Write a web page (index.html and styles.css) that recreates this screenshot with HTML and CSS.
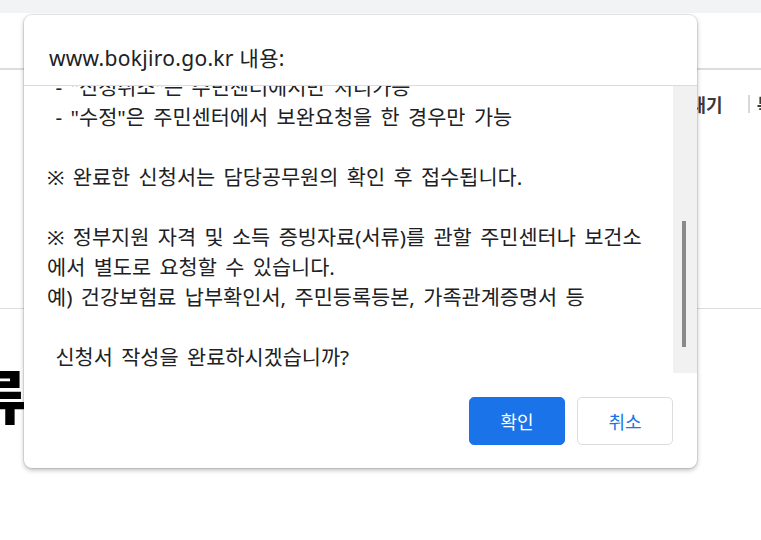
FILE: index.html
```html
<!DOCTYPE html>
<html lang="ko">
<head>
<meta charset="utf-8">
<title>복지로</title>
<link rel="stylesheet" href="styles.css">
</head>
<body>
<div class="page">
  <div class="topbar"></div>
  <header class="gnb"></header>
  <section class="util">
    <div class="util-links">
      <span class="util-link">보내기</span>
      <span class="util-sep"></span>
      <span class="util-link">복지로</span>
    </div>
  </section>
  <div class="heading-wrap">
    <h1 class="heading">복지서비스 분류</h1>
  </div>
</div>

<div class="dialog" role="dialog">
  <div class="dialog-head">www.bokjiro.go.kr 내용:</div>
  <div class="dialog-body">
    <div class="dialog-text">
      <div class="dialog-scroll"> - "신청취소"는 주민센터에서만 처리가능
 - "수정"은 주민센터에서 보완요청을 한 경우만 가능

※ 완료한 신청서는 담당공무원의 확인 후 접수됩니다.

※ 정부지원 자격 및 소득 증빙자료(서류)를 관할 주민센터나 보건소
에서 별도로 요청할 수 있습니다.
예) 건강보험료 납부확인서, 주민등록등본, 가족관계증명서 등

 신청서 작성을 완료하시겠습니까?</div>
    </div>
    <div class="scrollbar"><div class="scroll-thumb"></div></div>
  </div>
  <div class="dialog-foot">
    <button class="btn btn-primary" type="button">확인</button>
    <button class="btn btn-secondary" type="button">취소</button>
  </div>
</div>
</body>
</html>
```
FILE: styles.css
```css
* { box-sizing: border-box; }
html, body {
  margin: 0;
  padding: 0;
  background: #ffffff;
}
body {
  width: 761px;
  height: 540px;
  overflow: hidden;
  font-family: "Noto Sans", "Noto Sans CJK KR", sans-serif;
  color: #202124;
}
.page {
  width: 761px;
}
.topbar {
  height: 13px;
  background: #f1f3f4;
}
.gnb {
  height: 57px;
  border-bottom: 2px solid #dddddd;
}
.util {
  height: 239px;
  border-bottom: 1px solid #dddddd;
  padding-top: 21px;
}
.util-links {
  display: flex;
  align-items: center;
  padding-left: 673px;
  white-space: nowrap;
  overflow: hidden;
  font-family: "Noto Sans CJK KR", sans-serif;
  font-size: 18px;
  font-weight: 700;
  line-height: 26px;
  color: #3a3a3a;
}
.util-sep {
  width: 2px;
  height: 18px;
  margin: 0 7px 0 25px;
  background: #d8d8d8;
  flex: none;
}
.heading-wrap {
  width: 27px;
  display: flex;
  justify-content: flex-end;
  margin-top: 50px;
}
.heading {
  margin: 0;
  white-space: nowrap;
  font-family: "Noto Sans CJK KR", sans-serif;
  font-size: 58px;
  font-weight: 900;
  line-height: 70px;
  color: #000000;
}

/* dialog */
.dialog {
  position: absolute;
  left: 24px;
  top: 15px;
  width: 673px;
  height: 453px;
  background: #ffffff;
  border-radius: 8px;
  box-shadow: 0 0 0 1px rgba(0,0,0,0.08), 0 2px 5px rgba(0,0,0,0.28);
  overflow: hidden;
  display: flex;
  flex-direction: column;
}
.dialog-head {
  height: 71px;
  flex: none;
  padding: 29px 25px 0;
  border-bottom: 1px solid #dadce0;
  font-size: 21px;
  letter-spacing: 0.3px;
  line-height: 28px;
  color: #202124;
}
.dialog-body {
  height: 287px;
  flex: none;
  display: flex;
}
.dialog-text {
  flex: 1;
  overflow: hidden;
  padding-left: 23px;
}
.dialog-scroll {
  margin-top: -14px;
  white-space: pre;
  font-size: 20.8px;
  line-height: 30px;
  word-spacing: 3px;
  color: #202124;
}
.scrollbar {
  width: 24px;
  flex: none;
  background: #f1f1f1;
  padding: 135px 0 0 9px;
}
.scroll-thumb {
  width: 4px;
  height: 126px;
  background: #8a8a8a;
}
.dialog-foot {
  flex: 1;
  display: flex;
  justify-content: flex-end;
  align-items: flex-start;
  gap: 12px;
  padding: 24px 24px 0 0;
}
.btn {
  width: 96px;
  height: 48px;
  border-radius: 5px;
  font-family: "Noto Sans CJK KR", sans-serif;
  font-size: 18px;
  cursor: pointer;
}
.btn-primary {
  background: #1a73e8;
  border: 1px solid #1a73e8;
  color: #ffffff;
}
.btn-secondary {
  background: #ffffff;
  border: 1px solid #dadce0;
  color: #1a73e8;
}
```
